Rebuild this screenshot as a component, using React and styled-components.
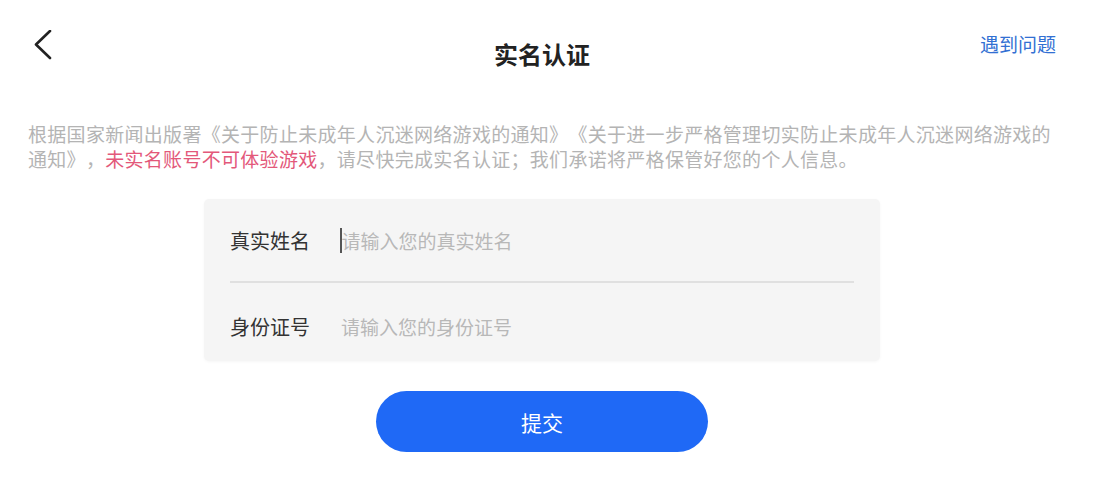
import React from 'react';
import styled, { createGlobalStyle } from 'styled-components';

const GlobalStyle = createGlobalStyle`
    * { box-sizing : border-box; }
    body {
        margin : 0;
        background : #ffffff;
        font-family : "Noto Sans CJK SC", "Noto Sans", sans-serif;
        text-spacing-trim : space-all;
    }
`

const Page = styled.div`
    width : 1084px;
    padding : 0 28px;
    display : flex;
    flex-direction : column;
`

const Header = styled.div`
    display : grid;
    grid-template-columns : 1fr auto 1fr;
    align-items : start;
    padding-top : 30px;

    .back {
        display : flex;
        padding-left : 6px;
    }
    .title {
        padding-top : 10px;
        font-size : 24px;
        line-height : 28px;
        font-weight : 700;
        color : #222;
    }
    .help {
        justify-self : end;
        font-size : 19px;
        line-height : 28px;
        color : #3270d3;
    }
`

const Notice = styled.p`
    margin : 53px 0 0;
    font-size : 19px;
    line-height : 25px;
    letter-spacing : 0.3px;
    color : #b4b4b4;
    text-spacing-trim : space-all;

    .warn {
        color : #e3587a;
    }
`

const Card = styled.div`
    width : 676px;
    margin : 28px auto 0;
    padding : 0 26px;
    background : #f5f5f5;
    border-radius : 5px;
    box-shadow : 0 1px 3px rgba(0,0,0,0.04);
`

const Row = styled.div`
    display : flex;
    align-items : center;
    height : ${props => props.$height}px;
    padding-top : ${props => props.$offset || 0}px;
    border-bottom : ${props => props.$divider ? '2px solid #e0e0e0' : 'none'};
`

const Label = styled.div`
    width : 80px;
    margin-right : 31px;
    font-size : 20px;
    color : #333;
    white-space : nowrap;
`

const Caret = styled.span`
    width : 1.5px;
    height : 25px;
    background : #555;
    margin-left : -1px;
`

const Input = styled.input`
    flex : 1;
    border : none;
    outline : none;
    background : transparent;
    padding : 0;
    font-family : inherit;
    font-size : 19px;
    color : #333;

    &::placeholder {
        color : #b8b8b8;
    }
`

const Submit = styled.button`
    width : 332px;
    height : 61px;
    margin : 30px auto 0;
    border : none;
    border-radius : 31px;
    background : #1f69f6;
    color : #fff;
    font-family : inherit;
    font-size : 21px;
    cursor : pointer;
`

export default function App() {
    return (
        <Page>
            <GlobalStyle/>
            <Header>
                <div className="back">
                    <svg width="18" height="30" viewBox="0 0 18 30">
                        <polyline points="16,1 2,14.5 16,28" fill="none" stroke="#222" strokeWidth="2.6" strokeLinecap="round" strokeLinejoin="round"/>
                    </svg>
                </div>
                <div className="title">实名认证</div>
                <div className="help">遇到问题</div>
            </Header>
            <Notice>
                根据国家新闻出版署《关于防止未成年人沉迷网络游戏的通知》《关于进一步严格管理切实防止未成年人沉迷网络游戏的通知》，<span className="warn">未实名账号不可体验游戏</span>，请尽快完成实名认证；我们承诺将严格保管好您的个人信息。
            </Notice>
            <Card>
                <Row $height={84} $divider>
                    <Label>真实姓名</Label>
                    <Caret/>
                    <Input placeholder="请输入您的真实姓名"/>
                </Row>
                <Row $height={78} $offset={8}>
                    <Label>身份证号</Label>
                    <Input placeholder="请输入您的身份证号"/>
                </Row>
            </Card>
            <Submit>提交</Submit>
        </Page>
    );
}
